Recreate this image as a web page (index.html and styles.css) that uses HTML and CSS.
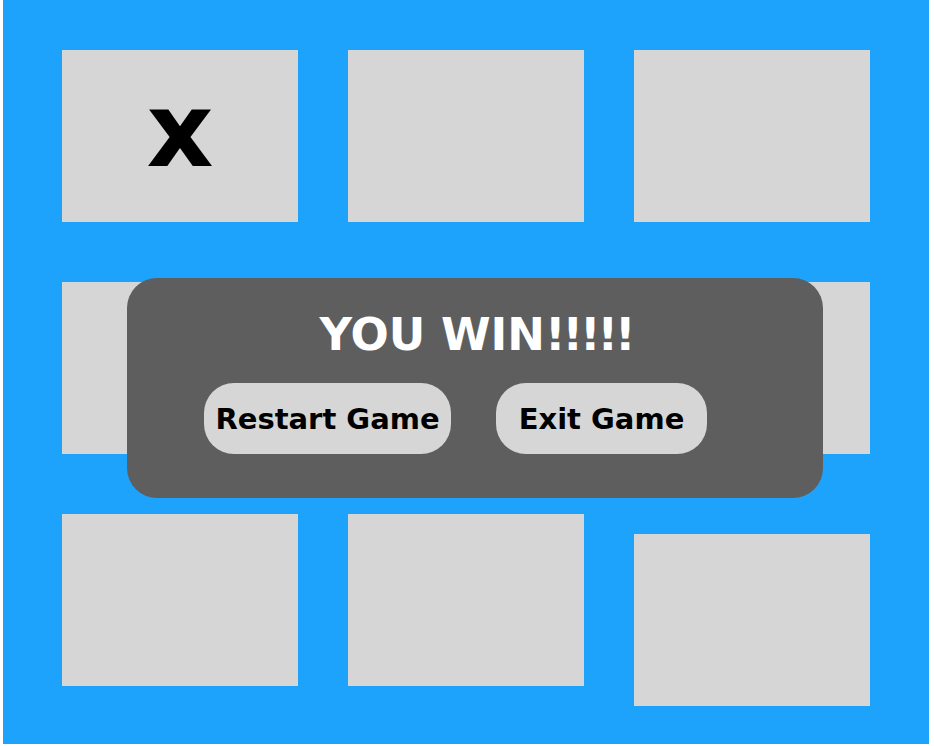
FILE: index.html
```html
<!DOCTYPE html>
<html lang="en">
<head>
    <meta charset="UTF-8">
    <meta name="viewport" content="width=device-width, initial-scale=1.0">
    <title>Tic Tac Toe</title>
    <link rel="stylesheet" href="styles.css">
</head>
<body>
    <div class="board">
        <div class="grid">
            <div class="cell"><span class="mark">x</span></div>
            <div class="cell"></div>
            <div class="cell"></div>
            <div class="cell"></div>
            <div class="cell"></div>
            <div class="cell"></div>
            <div class="cell"></div>
            <div class="cell"></div>
            <div class="cell cell-low"></div>
        </div>

        <div class="popup">
            <h1 class="popup-title">YOU WIN<span class="bangs">!!!!!</span></h1>
            <div class="popup-buttons">
                <button class="btn btn-restart">Restart Game</button>
                <button class="btn btn-exit">Exit Game</button>
            </div>
        </div>
    </div>
</body>
</html>
```

FILE: styles.css
```css
body {
    margin: 0;
    background: #ffffff;
    font-family: "DejaVu Sans", sans-serif;
}
.board {
    position: relative;
    box-sizing: border-box;
    width: 926px;
    height: 744px;
    margin-left: 3px;
    padding: 50px 0 0 59px;
    background: #1ea3fd;
}
.grid {
    display: grid;
    grid-template-columns: repeat(3, 236px);
    grid-auto-rows: 172px;
    column-gap: 50px;
    row-gap: 60px;
}
.cell {
    display: flex;
    align-items: center;
    justify-content: center;
    height: 172px;
    background: #d6d6d6;
}
.cell-low {
    margin-top: 20px;
}
.mark {
    font-size: 104px;
    font-weight: 700;
    line-height: 1;
    color: #000;
    margin-top: -12px;
}
.popup {
    position: absolute;
    left: 124px;
    top: 278px;
    box-sizing: border-box;
    width: 696px;
    height: 220px;
    border-radius: 30px;
    background: #5e5e5e;
    padding-top: 28px;
}
.popup-title {
    margin: 0;
    text-align: center;
    padding-left: 2px;
    font-size: 45px;
    font-weight: 700;
    line-height: 58px;
    color: #ffffff;
}
.bangs {
    letter-spacing: -3px;
}
.popup-buttons {
    display: flex;
    gap: 45px;
    margin-top: 19px;
    padding-left: 77px;
}
.btn {
    height: 71px;
    border: none;
    border-radius: 30px;
    background: #d6d6d6;
    color: #000;
    font-family: "DejaVu Sans", sans-serif;
    font-size: 29px;
    font-weight: 700;
    padding: 0;
}
.btn-restart {
    width: 247px;
}
.btn-exit {
    width: 211px;
}
```
